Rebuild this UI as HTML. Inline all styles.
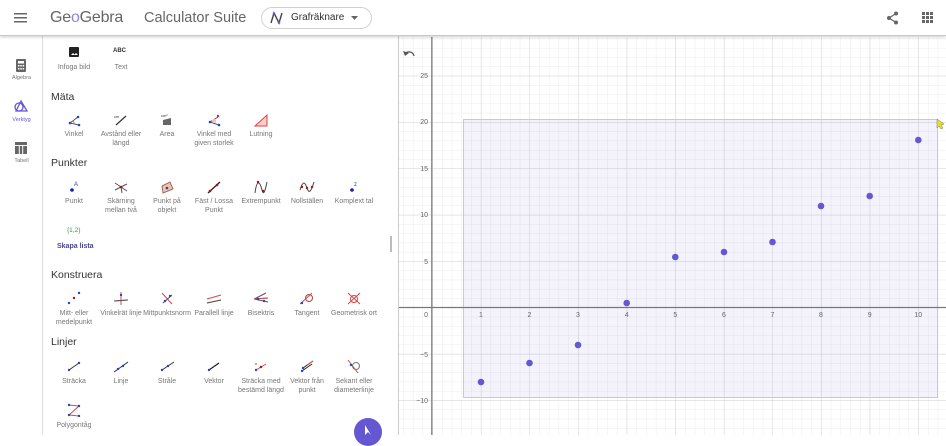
<!DOCTYPE html>
<html><head><meta charset="utf-8"><style>
*{margin:0;padding:0;box-sizing:border-box}
body{width:946px;height:435px;overflow:hidden;background:#fff;font-family:"Liberation Sans",sans-serif;position:relative}
.hdr{position:absolute;left:0;top:0;width:946px;height:36px;background:#fff;border-bottom:1px solid #c8c8c8;box-shadow:0 1px 3px rgba(0,0,0,.2);z-index:5}
.abs{position:absolute}
.rail{position:absolute;left:0;top:36px;width:43px;height:399px;border-right:1px solid #ddd;background:#fff}
.rl{position:absolute;width:43px;text-align:center;font-size:5.5px;color:#777}
.panel{position:absolute;left:43px;top:36px;width:356px;height:399px;border-right:1px solid #ccc;background:#fff}
.h{position:absolute;left:51px;font-size:10.5px;color:#333}
.lb{position:absolute;width:60px;margin-left:-30px;text-align:center;font-size:7px;line-height:8.5px;color:#777}
.ic{position:absolute;width:16px;height:14px;margin-left:-8px}
</style></head><body>
<div class="hdr">
 <svg class="abs" style="left:14px;top:12px" width="14" height="12"><rect y="1" width="13" height="1.5" fill="#666"/><rect y="5" width="13" height="1.5" fill="#666"/><rect y="9" width="13" height="1.5" fill="#666"/></svg>
 <div class="abs" style="left:50px;top:9px;font-size:16px;color:#666;letter-spacing:-.2px">Ge<span style="color:#8a8ad8">o</span>Gebra</div>
 <div class="abs" style="left:144px;top:10px;font-size:14.5px;color:#666">Calculator Suite</div>
 <div class="abs" style="left:261px;top:7px;width:111px;height:22px;border:1px solid #d0d0d0;border-radius:11px"></div>
 <svg class="abs" style="left:270px;top:11px" width="14" height="14"><path d="M1 12 L4 2 L9 12 L12 2" fill="none" stroke="#444" stroke-width="1.4"/><circle cx="4" cy="2.5" r="1.3" fill="#6557d2"/><circle cx="9" cy="11.5" r="1.3" fill="#6557d2"/></svg>
 <div class="abs" style="left:291px;top:12px;font-size:10px;color:#333">Grafräknare</div>
 <svg class="abs" style="left:351px;top:16px" width="8" height="5"><path d="M0 0h7L3.5 4z" fill="#666"/></svg>
 <svg class="abs" style="left:886px;top:11px" width="13" height="14"><circle cx="10" cy="2.5" r="2" fill="#666"/><circle cx="3" cy="7" r="2" fill="#666"/><circle cx="10" cy="11.5" r="2" fill="#666"/><path d="M10 2.5L3 7L10 11.5" stroke="#666" fill="none" stroke-width="1.2"/></svg>
 <svg class="abs" style="left:922px;top:12px" width="11" height="11" fill="#666"><rect x="0" y="0" width="3" height="3"/><rect x="4" y="0" width="3" height="3"/><rect x="8" y="0" width="3" height="3"/><rect x="0" y="4" width="3" height="3"/><rect x="4" y="4" width="3" height="3"/><rect x="8" y="4" width="3" height="3"/><rect x="0" y="8" width="3" height="3"/><rect x="4" y="8" width="3" height="3"/><rect x="8" y="8" width="3" height="3"/></svg>
</div>
<div class="rail">
 <svg class="abs" style="left:16px;top:23px" width="10" height="13"><rect width="10" height="13" rx="1" fill="#666"/><rect x="2" y="2" width="6" height="2.5" fill="#fff"/><g fill="#fff"><rect x="2" y="6" width="1.5" height="1.5"/><rect x="4.3" y="6" width="1.5" height="1.5"/><rect x="6.6" y="6" width="1.5" height="1.5"/><rect x="2" y="9" width="1.5" height="1.5"/><rect x="4.3" y="9" width="1.5" height="1.5"/><rect x="6.6" y="9" width="1.5" height="1.5"/></g></svg>
 <div class="rl" style="top:39px">Algebra</div>
 <svg class="abs" style="left:14px;top:64px" width="14" height="12"><circle cx="5" cy="7" r="4" fill="none" stroke="#6557d2" stroke-width="1.3"/><path d="M7 1L2 11H13Z" fill="none" stroke="#6557d2" stroke-width="1.3"/></svg>
 <div class="rl" style="top:81px;color:#6557d2">Verktyg</div>
 <svg class="abs" style="left:15px;top:106px" width="12" height="12"><rect width="12" height="12" fill="#666"/><path d="M0 3.5h12M4.3 3.5v8.5M7.7 3.5v8.5" stroke="#fff" stroke-width="1"/></svg>
 <div class="rl" style="top:122px">Tabell</div>
</div>
<div class="panel"></div>
<div class="abs" style="left:390px;top:236px;width:2px;height:16px;background:#bbb"></div>

<svg class="ic" style="left:74px;top:46px" width="16" height="14"><rect x="3" y="1" width="10" height="10" rx="1" fill="#222"/><path d="M5 9l2-2 1.5 1.5L10 7l2 2z" fill="#fff"/></svg>
<div class="lb" style="left:74px;top:64px">Infoga bild</div>
<div class="abs" style="left:113px;top:48px;font-size:6px;font-weight:bold;color:#333">ABC</div>
<div class="lb" style="left:121px;top:64px">Text</div>

<div class="h" style="top:91px">Mäta</div>
<svg class="ic" style="left:74px;top:113px"><path d="M4 10L12 4M4 10L13 12" stroke="#555" fill="none"/><path d="M7 8a3 3 0 0 1 1 3" stroke="#e66" fill="#fcc"/><circle cx="4" cy="10" r="1.3" fill="#24c"/><circle cx="12" cy="4" r="1.3" fill="#24c"/><circle cx="13" cy="12" r="1.3" fill="#24c"/></svg>
<svg class="ic" style="left:121px;top:113px"><path d="M3 12L13 3" stroke="#333" stroke-width="1.2"/><text x="1" y="5" font-size="4" fill="#333">cm</text></svg>
<svg class="ic" style="left:167px;top:113px"><path d="M4 7L12 5V12H4Z" fill="#666"/><text x="2" y="4" font-size="4" fill="#333">cm²</text></svg>
<svg class="ic" style="left:214px;top:113px"><path d="M4 9L13 12M4 9L12 4" stroke="#555" fill="none"/><circle cx="8" cy="8" r="2" fill="#fbb"/><circle cx="4" cy="9" r="1.3" fill="#24c"/><circle cx="12" cy="3" r="1.2" fill="#c22"/><circle cx="13" cy="12" r="1.3" fill="#24c"/></svg>
<svg class="ic" style="left:261px;top:113px"><path d="M2 13L14 2V13Z" fill="#fcc" stroke="#d44"/></svg>
<div class="lb" style="left:74px;top:131px">Vinkel</div>
<div class="lb" style="left:121px;top:131px">Avstånd eller<br>längd</div>
<div class="lb" style="left:167px;top:131px">Area</div>
<div class="lb" style="left:214px;top:131px">Vinkel med<br>given storlek</div>
<div class="lb" style="left:261px;top:131px">Lutning</div>

<div class="h" style="top:157px">Punkter</div>
<svg class="ic" style="left:74px;top:180px"><circle cx="6" cy="10" r="1.8" fill="#12a"/><text x="8" y="6" font-size="6" fill="#24c">A</text></svg>
<svg class="ic" style="left:121px;top:180px"><path d="M2 3L14 11M14 4L2 10M8 7l1 6" stroke="#555" fill="none"/><circle cx="8" cy="7" r="1.3" fill="#a11"/></svg>
<svg class="ic" style="left:167px;top:180px"><path d="M3 6L11 2L14 9L4 13Z" fill="#e8c8a8" stroke="#a66"/><circle cx="8" cy="8" r="1.3" fill="#24c"/></svg>
<svg class="ic" style="left:214px;top:180px"><path d="M2 13L14 2" stroke="#222" stroke-width="1.3"/><circle cx="4" cy="11" r="1.3" fill="#a11"/><circle cx="11" cy="5" r="1.3" fill="#a11"/></svg>
<svg class="ic" style="left:261px;top:180px"><path d="M2 13C4 -2 7 2 9 10S13 6 14 2" stroke="#444" fill="none"/><circle cx="5" cy="2" r="1.2" fill="#a11"/><circle cx="10" cy="11" r="1.2" fill="#a11"/></svg>
<svg class="ic" style="left:307px;top:180px"><path d="M1 10C4 0 6 2 8 8S12 12 15 2" stroke="#444" fill="none"/><circle cx="3" cy="7" r="1.2" fill="#a11"/><circle cx="8" cy="8" r="1.2" fill="#a11"/><circle cx="13" cy="7" r="1.2" fill="#a11"/></svg>
<svg class="ic" style="left:354px;top:180px"><circle cx="6" cy="10" r="1.8" fill="#12a"/><text x="8" y="6" font-size="6" fill="#24c">z</text></svg>
<div class="lb" style="left:74px;top:198px">Punkt</div>
<div class="lb" style="left:121px;top:198px">Skärning<br>mellan två</div>
<div class="lb" style="left:167px;top:198px">Punkt på<br>objekt</div>
<div class="lb" style="left:214px;top:198px">Fäst / Lossa<br>Punkt</div>
<div class="lb" style="left:261px;top:198px">Extrempunkt</div>
<div class="lb" style="left:307px;top:198px">Nollställen</div>
<div class="lb" style="left:354px;top:198px">Komplext tal</div>
<div class="abs" style="left:67px;top:227px;font-size:6.5px;color:#2a2">{1,2}</div>
<div class="abs" style="left:57px;top:243px;font-size:7px;font-weight:bold;color:#44449a">Skapa lista</div>

<div class="h" style="top:269px">Konstruera</div>
<svg class="ic" style="left:74px;top:291px"><circle cx="3" cy="12" r="1.2" fill="#24c"/><circle cx="8" cy="7" r="1.2" fill="#a11"/><circle cx="13" cy="2" r="1.2" fill="#24c"/></svg>
<svg class="ic" style="left:121px;top:291px"><path d="M1 10L15 9M8 1V14" stroke="#d44"/><path d="M1 10L15 9" stroke="#555"/><circle cx="8" cy="4" r="1.2" fill="#24c"/></svg>
<svg class="ic" style="left:167px;top:291px"><path d="M3 2L13 13" stroke="#d44"/><path d="M4 12L13 4" stroke="#555"/><circle cx="11" cy="5" r="1.2" fill="#24c"/><circle cx="6" cy="10" r="1.2" fill="#24c"/></svg>
<svg class="ic" style="left:214px;top:291px"><path d="M1 8L15 4M1 12L15 9" stroke="#d44"/><path d="M1 12L15 9" stroke="#555"/></svg>
<svg class="ic" style="left:261px;top:291px"><path d="M1 8L15 11M1 8L13 2M1 8L15 7" stroke="#555"/><path d="M1 8L15 7" stroke="#d44"/><circle cx="5" cy="8" r="1.2" fill="#24c"/><circle cx="11" cy="10" r="1.2" fill="#24c"/></svg>
<svg class="ic" style="left:307px;top:291px"><circle cx="10" cy="7" r="3.5" fill="none" stroke="#a44"/><path d="M1 13L13 2" stroke="#d44"/><circle cx="3" cy="12" r="1.2" fill="#24c"/></svg>
<svg class="ic" style="left:354px;top:291px"><path d="M2 2L14 13M14 2L2 13" stroke="#d44"/><circle cx="8" cy="8" r="3.5" fill="none" stroke="#d44"/></svg>
<div class="lb" style="left:74px;top:310px">Mitt- eller<br>medelpunkt</div>
<div class="lb" style="left:121px;top:310px">Vinkelrät linje</div>
<div class="lb" style="left:167px;top:310px">Mittpunktsnorm</div>
<div class="lb" style="left:214px;top:310px">Parallell linje</div>
<div class="lb" style="left:261px;top:310px">Bisektris</div>
<div class="lb" style="left:307px;top:310px">Tangent</div>
<div class="lb" style="left:354px;top:310px">Geometrisk ort</div>

<div class="h" style="top:336px">Linjer</div>
<svg class="ic" style="left:74px;top:359px"><path d="M3 11L13 4" stroke="#333"/><circle cx="3" cy="11" r="1.2" fill="#24c"/><circle cx="13" cy="4" r="1.2" fill="#24c"/></svg>
<svg class="ic" style="left:121px;top:359px"><path d="M1 13L15 3" stroke="#333"/><circle cx="5" cy="10" r="1.2" fill="#24c"/><circle cx="10" cy="7" r="1.2" fill="#24c"/></svg>
<svg class="ic" style="left:167px;top:359px"><path d="M3 11L15 3" stroke="#333"/><circle cx="3" cy="11" r="1.2" fill="#24c"/><circle cx="9" cy="7" r="1.2" fill="#24c"/></svg>
<svg class="ic" style="left:214px;top:359px"><path d="M3 11L13 4" stroke="#222" stroke-width="1.3"/><circle cx="3" cy="11" r="1.2" fill="#24c"/></svg>
<svg class="ic" style="left:261px;top:359px"><path d="M3 11L13 5" stroke="#d44"/><circle cx="3" cy="11" r="1.2" fill="#24c"/><circle cx="8" cy="8" r="1.2" fill="#a11"/><circle cx="3" cy="5" r="1" fill="#999"/></svg>
<svg class="ic" style="left:307px;top:359px"><path d="M3 12L13 5M4 9L14 2" stroke="#222"/><path d="M8 6L14 2" stroke="#d44"/><circle cx="3" cy="12" r="1.2" fill="#24c"/><circle cx="4" cy="9" r="1.2" fill="#24c"/></svg>
<svg class="ic" style="left:354px;top:359px"><path d="M2 1L12 14" stroke="#d44"/><circle cx="10" cy="7" r="3.5" fill="none" stroke="#777"/><circle cx="5" cy="6" r="1.2" fill="#24c"/></svg>
<div class="lb" style="left:74px;top:378px">Sträcka</div>
<div class="lb" style="left:121px;top:378px">Linje</div>
<div class="lb" style="left:167px;top:378px">Stråle</div>
<div class="lb" style="left:214px;top:378px">Vektor</div>
<div class="lb" style="left:261px;top:378px">Sträcka med<br>bestämd längd</div>
<div class="lb" style="left:307px;top:378px">Vektor från<br>punkt</div>
<div class="lb" style="left:354px;top:378px">Sekant eller<br>diameterlinje</div>
<svg class="ic" style="left:74px;top:403px"><path d="M3 2L13 3L3 12L13 13" stroke="#d44" fill="none"/><circle cx="3" cy="2" r="1.2" fill="#24c"/><circle cx="13" cy="3" r="1.2" fill="#24c"/><circle cx="3" cy="12" r="1.2" fill="#24c"/><circle cx="13" cy="13" r="1.2" fill="#24c"/></svg>
<div class="lb" style="left:74px;top:422px">Polygontåg</div>
<div class="abs" style="left:354px;top:418px;width:28px;height:28px;border-radius:50%;background:#6557d2"></div>
<svg class="abs" style="left:363px;top:425px" width="10" height="10"><path d="M2 0L2 10L5 7L8 10Z" fill="#fff"/></svg>

<svg class="abs" style="left:399px;top:37px" width="547" height="398" viewBox="399 37 547 398">
 <defs>
  <pattern id="mn" patternUnits="userSpaceOnUse" x="432.3" y="307.5" width="9.72" height="9.27"><path d="M0 0V9.27M0 0H9.72" stroke="#ececec" stroke-width="1"/></pattern>
  <pattern id="mj" patternUnits="userSpaceOnUse" x="432.3" y="307.5" width="48.6" height="46.35"><path d="M0 0V46.35M0 0H48.6" stroke="#d4d4d4" stroke-width="1"/></pattern>
 </defs>
 <rect x="399" y="37" width="547" height="398" fill="url(#mn)"/>
 <rect x="399" y="37" width="547" height="398" fill="url(#mj)"/>
 <rect x="463.5" y="119.5" width="474" height="278" fill="rgba(101,87,210,0.07)" stroke="#c8c4ec" stroke-width="1"/>
 <path d="M431.8 37V435M399 307.5H946" stroke="#777" stroke-width="1.2"/>
 <g font-size="7" fill="#666" font-family="Liberation Sans" text-anchor="end">
  <text x="428" y="78">25</text><text x="428" y="124">20</text><text x="428" y="171">15</text><text x="428" y="217">10</text><text x="428" y="264">5</text><text x="428" y="357">−5</text><text x="428" y="403">−10</text><text x="428" y="317">0</text>
 </g>
 <g font-size="7" fill="#666" font-family="Liberation Sans" text-anchor="middle">
  <text x="481" y="317">1</text><text x="529.5" y="317">2</text><text x="578" y="317">3</text><text x="626.7" y="317">4</text><text x="675.3" y="317">5</text><text x="724" y="317">6</text><text x="772.5" y="317">7</text><text x="821" y="317">8</text><text x="869.7" y="317">9</text><text x="918.3" y="317">10</text>
 </g>
 <g fill="#6557d2">
  <circle cx="481" cy="382" r="3.3"/><circle cx="529.5" cy="363" r="3.3"/><circle cx="578" cy="345" r="3.3"/><circle cx="626.7" cy="303" r="3.3"/><circle cx="675.3" cy="257" r="3.3"/><circle cx="724" cy="252" r="3.3"/><circle cx="772.5" cy="242" r="3.3"/><circle cx="821" cy="206" r="3.3"/><circle cx="869.7" cy="196" r="3.3"/><circle cx="918.3" cy="140" r="3.3"/>
 </g>
 <path d="M405 54a5 5 0 0 1 9 2" stroke="#555" fill="none" stroke-width="1.3"/><path d="M403 51L405 56L409 53Z" fill="#555"/>
 <path d="M937 119L937 128L939 126L941 129L943 128L941 125L944 124Z" fill="#e8e020" stroke="#776" stroke-width=".5"/>
</svg>
</body></html>
